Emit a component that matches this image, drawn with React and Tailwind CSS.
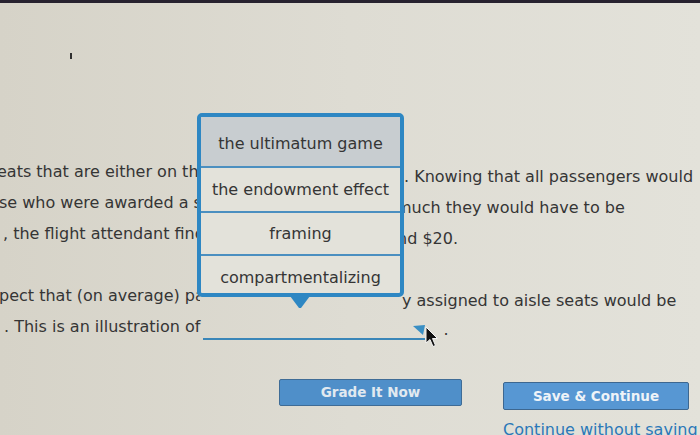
import React from "react";

const rows = [
  { left: "eats that are either on the", leftMl: "-ml-[3px]", right: ". Knowing that all passengers would", rightMl: "ml-[8px]" },
  { left: "se who were awarded a seat", leftMl: "-ml-[1px]", right: "much they would have to be", rightMl: "ml-[0px]" },
  { left: ", the flight attendant finds", leftMl: "ml-[3px]", right: "nd $20.", rightMl: "ml-[1px]" },
  null,
  { left: "pect that (on average) paid", leftMl: "-ml-[1px]", right: "y assigned to aisle seats would be", rightMl: "ml-[6px]" },
];

const options = [
  { label: "the ultimatum game", h: "h-[49px]", pt: "pt-[5px]", active: true },
  { label: "the endowment effect", h: "h-[45px]", pt: "pt-[0px]" },
  { label: "framing", h: "h-[43px]", pt: "pt-[1px]" },
  { label: "compartmentalizing", h: "h-[39px]", pt: "pt-[7px]" },
];

export default function App() {
  return (
    <div className="relative h-[435px] w-[700px] overflow-hidden bg-gradient-to-r from-[#d6d3c8] via-[#dedcd3] to-[#e3e2da] font-['DejaVu_Sans',sans-serif] text-[16px] text-[#353535]">
      <div className="h-[3px] bg-[#27222f]" />
      <div className="ml-[70px] mt-[50px] h-[6px] w-[2px] bg-[#2f2f2f]" />

      <div className="mt-[97px]">
        {rows.map((row, i) =>
          row ? (
            <div key={i} className="flex h-[31px] leading-[31px]">
              <div className="w-[200px] shrink-0 overflow-hidden whitespace-nowrap">
                <span className={`inline-block ${row.leftMl}`}>{row.left}</span>
              </div>
              <div className="w-[196px] shrink-0" />
              <div className="flex-1 overflow-hidden whitespace-nowrap pt-[5px]">
                <span className={`inline-block ${row.rightMl}`}>{row.right}</span>
              </div>
            </div>
          ) : (
            <div key={i} className="h-[31px]" />
          )
        )}

        <div className="flex h-[31px] items-center whitespace-nowrap leading-[31px]">
          <span className="ml-[4px]">. This is an illustration of</span>
          <div className="relative ml-[3px] mt-[2px] h-[24px] w-[222px] border-b-2 border-[#3a86b8]">
            <svg className="absolute bottom-[3px] right-0" width="12" height="10" viewBox="0 0 12 10">
              <polygon points="0,1 12,0 10,10" fill="#3a8fc4" />
            </svg>
          </div>
          <span className="ml-[18px] mt-[6px] leading-none">.</span>
        </div>
      </div>

      <div className="mt-[37px] flex items-start gap-[41px] pl-[279px]">
        <button className="h-[27px] w-[183px] rounded-[2px] border border-[#3f6c96] bg-[#4f8fc9] text-[13.5px] font-bold text-[#e1e9f0]">
          Grade It Now
        </button>
        <div className="mt-[3px] flex flex-col">
          <button className="h-[28px] w-[186px] rounded-[2px] border border-[#3d6790] bg-[#5797d3] text-[13.5px] font-bold text-[#eef3f8]">
            Save &amp; Continue
          </button>
          <a className="mt-[11px] whitespace-nowrap text-[16px] leading-[18px] text-[#2b78b8]">
            Continue without saving
          </a>
        </div>
      </div>

      {/* open dropdown menu */}
      <div className="absolute left-[197px] top-[113px] w-[207px]">
        <div className="overflow-hidden rounded-[5px] border-4 border-[#2e87c3] bg-[#e3e2da]">
          {options.map((o, i) => (
            <div
              key={o.label}
              className={`flex ${o.h} ${o.pt} items-center justify-center whitespace-nowrap ${
                i > 0 ? "border-t-2 border-[#4b8fc0]" : ""
              } ${o.active ? "bg-[#c8cdd0]" : ""}`}
            >
              {o.label}
            </div>
          ))}
        </div>
        <svg className="ml-[93px] -mt-[1px]" width="20" height="13" viewBox="0 0 20 13">
          <polygon points="0,0 20,0 11,12 9,12" fill="#2e87c3" />
        </svg>
      </div>

      {/* mouse pointer */}
      <svg className="absolute left-[425px] top-[326px]" width="14" height="22" viewBox="0 0 14 22">
        <path d="M1 1 L1 17 L5 13.5 L8 20.5 L10.5 19.5 L7.5 12.5 L12.5 12.5 Z" fill="#111" stroke="#f4f4f4" strokeWidth="1" />
      </svg>
    </div>
  );
}
